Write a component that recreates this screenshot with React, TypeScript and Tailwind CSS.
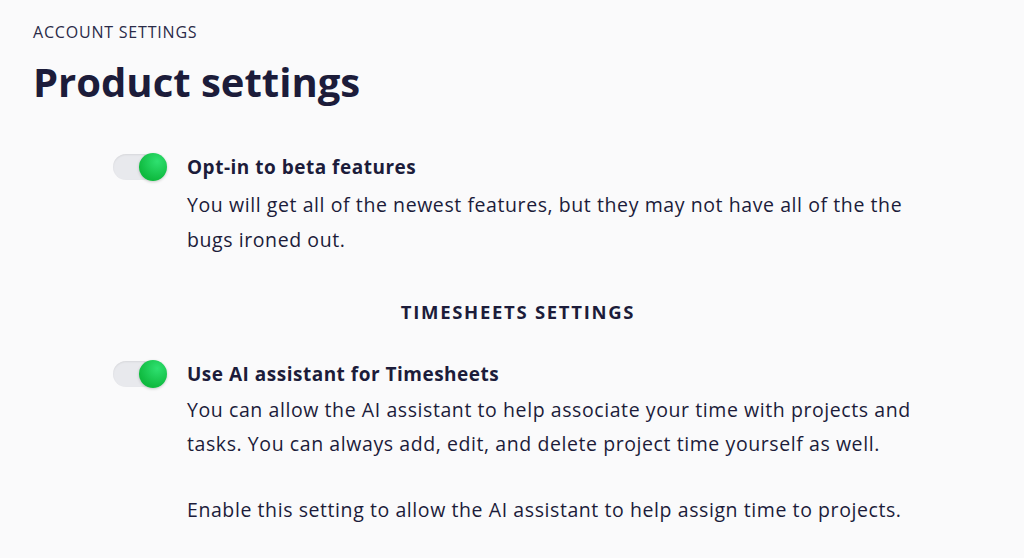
import React from "react";

function Toggle() {
  return (
    <div className="relative h-[28px] w-[54px] shrink-0">
      <div className="absolute left-0 top-[1px] h-[26px] w-[54px] rounded-full bg-[#e8e9ed] shadow-[inset_0_1px_2px_rgba(0,0,0,0.08)]" />
      <div className="absolute right-0 top-0 h-[28px] w-[28px] rounded-full bg-[radial-gradient(circle_at_65%_30%,#2fe070,#0fba3f_70%)] shadow-[0_1px_3px_rgba(0,0,0,0.2)]" />
    </div>
  );
}

export default function App() {
  return (
    <div
      className="h-[558px] w-full overflow-hidden bg-[#fafafb] text-[#1c1c3a]"
      style={{ fontFamily: "'Open Sans', Lato, sans-serif" }}
    >
      <div className="pl-[33px] pt-[22px]">
        <div className="text-[16px] leading-[20px] tracking-[0.8px] text-[#2a2a48]">ACCOUNT SETTINGS</div>
        <h1 className="mt-[16px] text-[40px] font-bold leading-[48px]">Product settings</h1>
      </div>

      <div className="ml-[113px] mt-[47px] w-[810px]">
        <div className="flex gap-[20px]">
          <Toggle />
          <div>
            <div className="text-[19px] font-bold leading-[28px] tracking-[0.5px]">Opt-in to beta features</div>
            <p className="mt-[6px] text-[19.5px] leading-[35px] tracking-[0.58px]">
              You will get all of the newest features, but they may not have all of the the bugs ironed out.
            </p>
          </div>
        </div>

        <div className="mt-[43px] text-center text-[18.5px] font-bold leading-[24px] tracking-[1.7px]">
          TIMESHEETS SETTINGS
        </div>

        <div className="mt-[36px] flex gap-[20px]">
          <Toggle />
          <div>
            <div className="text-[19px] font-bold leading-[28px] tracking-[0.5px]">Use AI assistant for Timesheets</div>
            <p className="mt-[5px] text-[19.5px] leading-[34px] tracking-[0.58px]">
              You can allow the AI assistant to help associate your time with projects and tasks. You can always add,
              edit, and delete project time yourself as well.
            </p>
            <p className="mt-[32px] text-[19.5px] leading-[34px] tracking-[0.58px]">
              Enable this setting to allow the AI assistant to help assign time to projects.
            </p>
          </div>
        </div>
      </div>
    </div>
  );
}
